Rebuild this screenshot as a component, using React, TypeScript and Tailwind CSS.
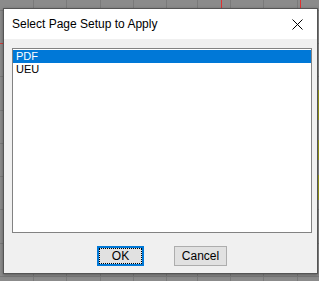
export default function App() {
  const items = ['PDF', 'UEU']
  const selected = 0

  return (
    <div className="relative h-[281px] w-[319px] overflow-hidden bg-[#8b8b8b] pt-[8px] pl-[3px]">
      {/* 뒤쪽 캔버스 격자 */}
      <svg className="absolute inset-0" width="319" height="281" viewBox="0 0 319 281">
        {[33, 66, 100, 133, 166, 197, 230, 263, 297].map((x) => (
          <line key={'v' + x} x1={x + 0.5} y1="0" x2={x + 0.5} y2="281" stroke="#7a7a7a" strokeWidth="1" />
        ))}
        {[10, 43, 76, 110, 143, 176, 209, 243, 276].map((y) => (
          <line key={'h' + y} x1="0" y1={y + 0.5} x2="319" y2={y + 0.5} stroke="#7a7a7a" strokeWidth="1" />
        ))}
        <line x1="0" y1="43.5" x2="10" y2="43.5" stroke="#d23a3a" strokeWidth="1" />
        <line x1="221.5" y1="0" x2="221.5" y2="10" stroke="#e03030" strokeWidth="1" />
        <line x1="300.5" y1="0" x2="300.5" y2="10" stroke="#e03030" strokeWidth="1" />
        <line x1="318.5" y1="90" x2="318.5" y2="120" stroke="#a0a020" strokeWidth="1" />
        <line x1="318.5" y1="140" x2="318.5" y2="160" stroke="#a0a020" strokeWidth="1" />
        <line x1="318.5" y1="175" x2="318.5" y2="200" stroke="#a0a020" strokeWidth="1" />
      </svg>

      {/* 대화상자 */}
      <div
        className="relative flex h-[266px] w-[315px] flex-col border border-[#555555] bg-[#f0f0f0] shadow-[0_1px_3px_rgba(0,0,0,0.35)]"
        style={{ fontFamily: '"Liberation Sans", Arial, sans-serif' }}
      >
        {/* 제목 표시줄 */}
        <div className="flex h-[30px] shrink-0 items-center justify-between bg-white pl-[8px] pr-[14px]">
          <span className="text-[12px] text-black">Select Page Setup to Apply</span>
          <svg width="11" height="11" viewBox="0 0 11 11" className="mt-[1px]">
            <path d="M0.5 0.5L10.5 10.5M10.5 0.5L0.5 10.5" stroke="#000" strokeWidth="1" fill="none" />
          </svg>
        </div>

        {/* 목록 */}
        <div className="mx-[8px] mt-[9px] flex h-[185px] w-[300px] flex-col border border-[#828282] bg-white py-px">
          {items.map((item, i) => (
            <div
              key={item}
              className={
                i === selected
                  ? 'flex h-[13px] items-center bg-[#0078d7] pl-[3px] text-[11px] leading-none text-white'
                  : 'flex h-[13px] items-center pl-[3px] text-[11px] leading-none text-black'
              }
            >
              {item}
            </div>
          ))}
        </div>

        {/* 버튼 */}
        <div className="mt-[13px] flex gap-[30px] pl-[93px]">
          <button className="flex h-[20px] w-[47px] items-center justify-center border-2 border-[#0078d7] bg-[#e1e1e1] p-0">
            <span className="flex h-full w-full items-center justify-center border border-dotted border-black text-[12px] text-black">
              OK
            </span>
          </button>
          <button className="flex h-[20px] w-[53px] items-center justify-center border border-[#adadad] bg-[#e1e1e1] text-[12px] text-black">
            Cancel
          </button>
        </div>
      </div>
    </div>
  )
}
